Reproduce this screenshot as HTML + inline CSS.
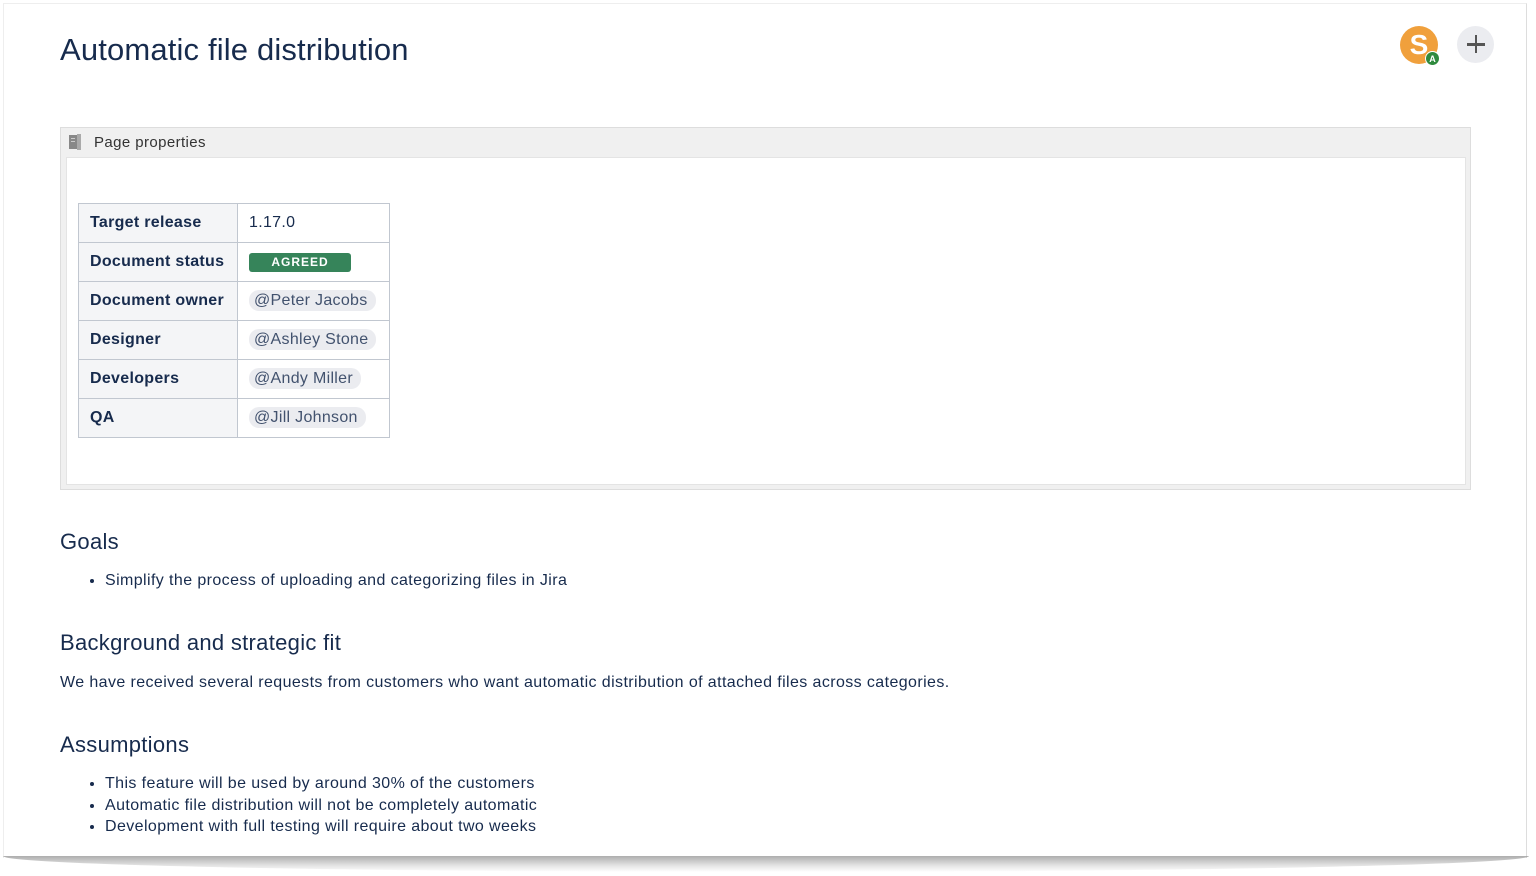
<!DOCTYPE html>
<html><head><meta charset="utf-8"><style>
*{margin:0;padding:0;box-sizing:border-box}
body{width:1536px;height:876px;background:#fff;font-family:"Liberation Sans",sans-serif;color:#172b4d;position:relative;overflow:hidden}
.page{position:absolute;left:3px;top:3px;width:1524px;height:855px;background:#fff;border-right:1px solid #ddd;border-left:1px solid #eee;border-top:1px solid #eee}
.shadow{position:absolute;left:3px;top:856px;width:1526px;height:16px;background:linear-gradient(#999,#ddd 60%,#fff);border-radius:0 0 50% 50%/0 0 100% 100%;opacity:.8}
h1{position:absolute;left:60px;top:32px;font-size:31px;font-weight:400;color:#172b4d;letter-spacing:0.15px}
.macro{position:absolute;left:60px;top:127px;width:1411px;height:363px;background:#f0f0f0;border:1px solid #ddd}
.macro .hd{position:absolute;left:33px;top:6px;font-size:15px;color:#333;letter-spacing:0.4px}
.macro .in{position:absolute;left:5px;top:29px;width:1400px;height:328px;background:#fff;border:1px solid #e4e4e4}
table{position:absolute;left:11px;top:45px;border-collapse:collapse;font-size:16px;letter-spacing:0.3px}
td{border:1px solid #c1c7d0;height:39px;padding:0 11px}
td.l{background:#f4f5f7;font-weight:bold;width:159px}
td.v{width:152px}
.m{background:#ebecf0;border-radius:10px;padding:2px 8px 2px 5px;color:#42526e}
.st{display:inline-block;background:#36845a;color:#fff;font-size:12px;font-weight:bold;letter-spacing:1px;width:102px;height:19px;line-height:19px;text-align:center;border-radius:3px}
h2{position:absolute;left:60px;font-size:22px;font-weight:400;letter-spacing:0.3px}
p,ul{position:absolute;left:60px;font-size:16px;line-height:21.5px;letter-spacing:0.4px}
ul{left:87px;padding-left:18px}
</style></head><body>
<div class="page"></div>
<div class="shadow"></div>
<h1>Automatic file distribution</h1>
<div style="position:absolute;left:1400px;top:26px;width:38px;height:38px;border-radius:50%;background:#f0a03c;color:#fff;font-weight:bold;font-size:28px;text-align:center;line-height:38px">S</div>
<div style="position:absolute;left:1425px;top:51px;width:15px;height:15px;border-radius:50%;background:#2f8a3e;color:#fff;font-size:9px;font-weight:bold;text-align:center;line-height:15px;border:1px solid #fff">A</div>
<div style="position:absolute;left:1457px;top:26px;width:37px;height:37px;border-radius:50%;background:#ebecf0"></div>
<div style="position:absolute;left:1467px;top:43px;width:18px;height:2.5px;background:#555"></div>
<div style="position:absolute;left:1474.8px;top:35px;width:2.5px;height:18px;background:#555"></div>
<div class="macro">
<svg style="position:absolute;left:8px;top:6px" width="12" height="16" viewBox="0 0 12 16"><rect x="0" y="1" width="8" height="14" fill="#888"/><rect x="8" y="0" width="4" height="16" fill="#aaa"/><rect x="2" y="4" width="4" height="1" fill="#ccc"/><rect x="2" y="7" width="4" height="1" fill="#ccc"/></svg>
<div class="hd">Page properties</div>
<div class="in">
<table>
<tr><td class="l">Target release</td><td class="v">1.17.0</td></tr>
<tr><td class="l">Document status</td><td class="v"><span class="st">AGREED</span></td></tr>
<tr><td class="l">Document owner</td><td class="v"><span class="m">@Peter Jacobs</span></td></tr>
<tr><td class="l">Designer</td><td class="v"><span class="m">@Ashley Stone</span></td></tr>
<tr><td class="l">Developers</td><td class="v"><span class="m">@Andy Miller</span></td></tr>
<tr><td class="l">QA</td><td class="v"><span class="m">@Jill Johnson</span></td></tr>
</table>
</div></div>
<h2 style="top:529px">Goals</h2>
<ul style="top:570px"><li>Simplify the process of uploading and categorizing files in Jira</li></ul>
<h2 style="top:630px">Background and strategic fit</h2>
<p style="top:672px">We have received several requests from customers who want automatic distribution of attached files across categories.</p>
<h2 style="top:732px">Assumptions</h2>
<ul style="top:773px"><li>This feature will be used by around 30% of the customers</li><li>Automatic file distribution will not be completely automatic</li><li>Development with full testing will require about two weeks</li></ul>
</body></html>
